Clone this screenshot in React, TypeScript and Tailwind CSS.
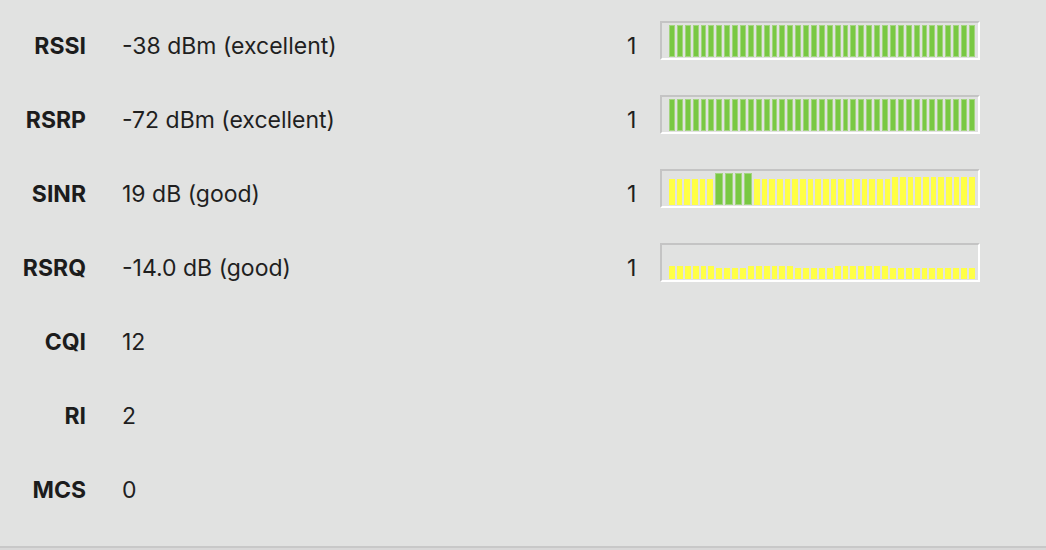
import React from "react";

type Row = {
  label: string;
  value: string;
  bars?: { heights: number[]; green: number[] };
};

const fill = (n: number, h: number) => Array.from({ length: n }, () => h);
const all = Array.from({ length: 39 }, (_, i) => i);

const rows: Row[] = [
  { label: "RSSI", value: "-38 dBm (excellent)", bars: { heights: fill(39, 32), green: all } },
  { label: "RSRP", value: "-72 dBm (excellent)", bars: { heights: fill(39, 32), green: all } },
  {
    label: "SINR",
    value: "19 dB (good)",
    bars: {
      heights: [...fill(6, 26), ...fill(4, 32), ...fill(18, 26), ...fill(11, 28)],
      green: [6, 7, 8, 9],
    },
  },
  {
    label: "RSRQ",
    value: "-14.0 dB (good)",
    bars: {
      heights: [
        ...fill(6, 13),
        ...fill(4, 11),
        ...fill(6, 13),
        ...fill(5, 11),
        ...fill(7, 13),
        ...fill(11, 11),
      ],
      green: [],
    },
  },
  { label: "CQI", value: "12" },
  { label: "RI", value: "2" },
  { label: "MCS", value: "0" },
];

function SignalBars({ heights, green }: { heights: number[]; green: number[] }) {
  return (
    <div className="flex h-[39px] w-[320px] items-end gap-[2px] border-2 border-t-[#c4c4c4] border-l-[#c4c4c4] border-b-white border-r-white pb-px pl-[7px] pr-[3px]">
      {heights.map((h, i) => {
        const isGreen = green.includes(i);
        return (
          <div
            key={i}
            className={
              isGreen
                ? "flex-1 border border-[#a3d57f] bg-[#79c843]"
                : "flex-1 bg-[#ffff46]"
            }
            style={{ height: h }}
          />
        );
      })}
    </div>
  );
}

export default function App() {
  return (
    <div className="h-[550px] w-full bg-[#d8d8d8] font-['Inter',sans-serif]">
      <div className="h-[548px] border-b-2 border-[#c8c8c8] bg-[#e1e2e1] pt-[9px]">
        {rows.map((row) => (
          <div key={row.label} className="flex h-[74px] items-center">
            <div className="w-[86px] text-right text-[23px] font-bold text-[#1c1c1c]">
              {row.label}
            </div>
            <div className="ml-[36px] w-[505px] text-[23px] text-[#1f1f1f]">{row.value}</div>
            {row.bars && (
              <>
                <div className="w-[33px] text-[23px] text-[#1f1f1f]">1</div>
                <div className="mb-[11px]">
                  <SignalBars heights={row.bars.heights} green={row.bars.green} />
                </div>
              </>
            )}
          </div>
        ))}
      </div>
    </div>
  );
}
